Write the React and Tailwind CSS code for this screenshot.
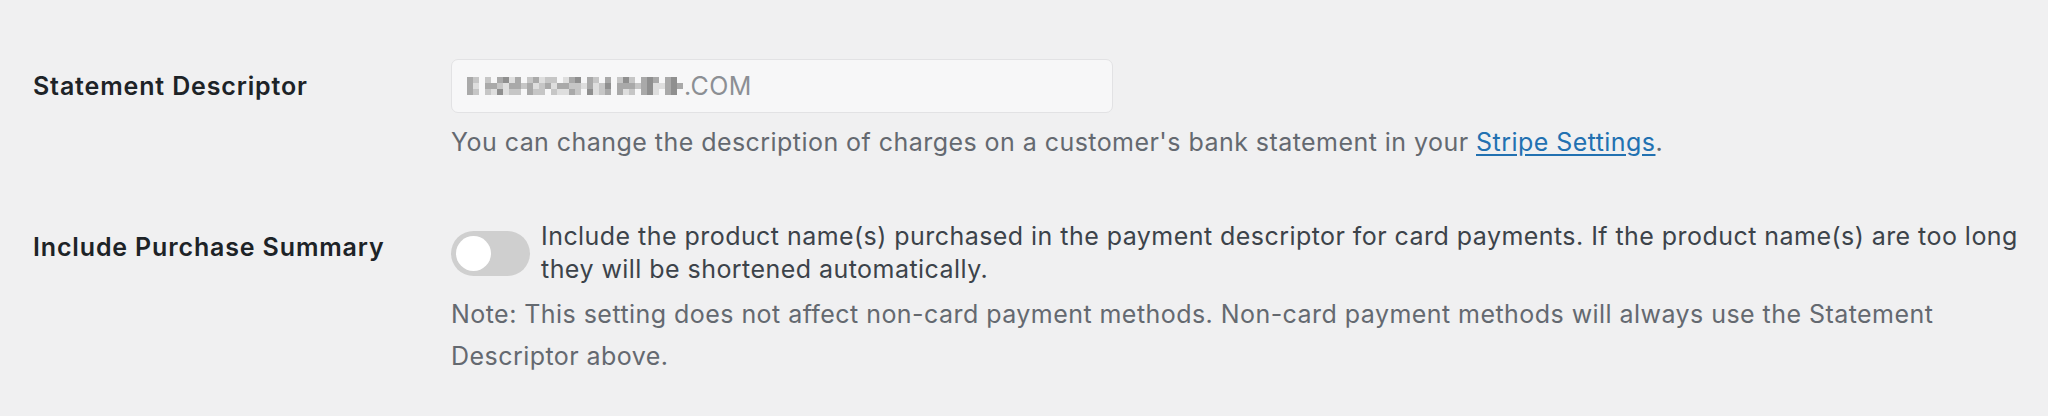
import { useState } from "react";

// shades for the pixelated (redacted) part of the descriptor
const SHADES = ["bg-transparent", "bg-[#dedede]", "bg-[#c6c6c6]", "bg-[#a9a9a9]", "bg-[#8f8f8f]"];

const MOSAIC = [
    "320203413023122013403203024203430340",
    "310332133231231332213124033323411343",
    "320214122032202113204123031203410340",
];

function Redacted() {
    return (
        <span className="inline-flex flex-col mr-[1px]">
            {MOSAIC.map((row, r) => (
                <span key={r} className="flex">
                    {row.split("").map((c, i) => (
                        <span key={i} className={`w-[6px] h-[6px] ${SHADES[Number(c)]}`} />
                    ))}
                </span>
            ))}
        </span>
    );
}

function Toggle({ checked, onChange }) {
    return (
        <button
            type="button"
            onClick={() => onChange(!checked)}
            className={`shrink-0 w-[79px] h-[45px] rounded-full p-[5px] flex items-center transition-colors ${
                checked ? "bg-[#2271b1] justify-end" : "bg-[#cfcfcf] justify-start"
            }`}
        >
            <span className="block w-[35px] h-[35px] rounded-full bg-white" />
        </button>
    );
}

export default function App() {
    const [purchaseSummary, setPurchaseSummary] = useState(false);

    return (
        <div className="w-full h-[416px] bg-[#f0f0f1] pl-[33px] pr-[20px] pt-[59px] font-[Inter,'Noto_Sans',sans-serif] text-[25px] tracking-[0.45px]">
            {/* Statement Descriptor */}
            <div className="grid grid-cols-[418px_1fr]">
                <div className="font-semibold text-[#1d2327] leading-[54px] tracking-[0.85px]">Statement Descriptor</div>
                <div>
                    <div className="w-[662px] h-[54px] rounded-[7px] border border-[#e2e2e4] bg-[#f7f7f8] pl-[15px] flex items-center text-[#8c8f94]">
                        <Redacted />
                        <span className="leading-none">.COM</span>
                    </div>
                    <p className="mt-[11px] leading-[36px] text-[#646970]">
                        You can change the description of charges on a customer's bank statement in your{" "}
                        <a href="#" className="text-[#2271b1] underline underline-offset-[3px]">Stripe Settings</a>.
                    </p>
                </div>
            </div>

            {/* Include Purchase Summary */}
            <div className="grid grid-cols-[418px_1fr] mt-[60px]">
                <div className="font-semibold text-[#1d2327] leading-[33px] pt-[11px] tracking-[0.85px]">Include Purchase Summary</div>
                <div>
                    <label className="flex items-center gap-[11px] cursor-pointer">
                        <Toggle checked={purchaseSummary} onChange={setPurchaseSummary} />
                        <span className="leading-[33px] text-[#3c434a]">
                            Include the product name(s) purchased in the payment descriptor for card payments. If the product name(s) are too long they will be shortened automatically.
                        </span>
                    </label>
                    <p className="mt-[7px] leading-[42px] text-[#646970]">
                        Note: This setting does not affect non-card payment methods. Non-card payment methods will always use the Statement Descriptor above.
                    </p>
                </div>
            </div>
        </div>
    );
}
